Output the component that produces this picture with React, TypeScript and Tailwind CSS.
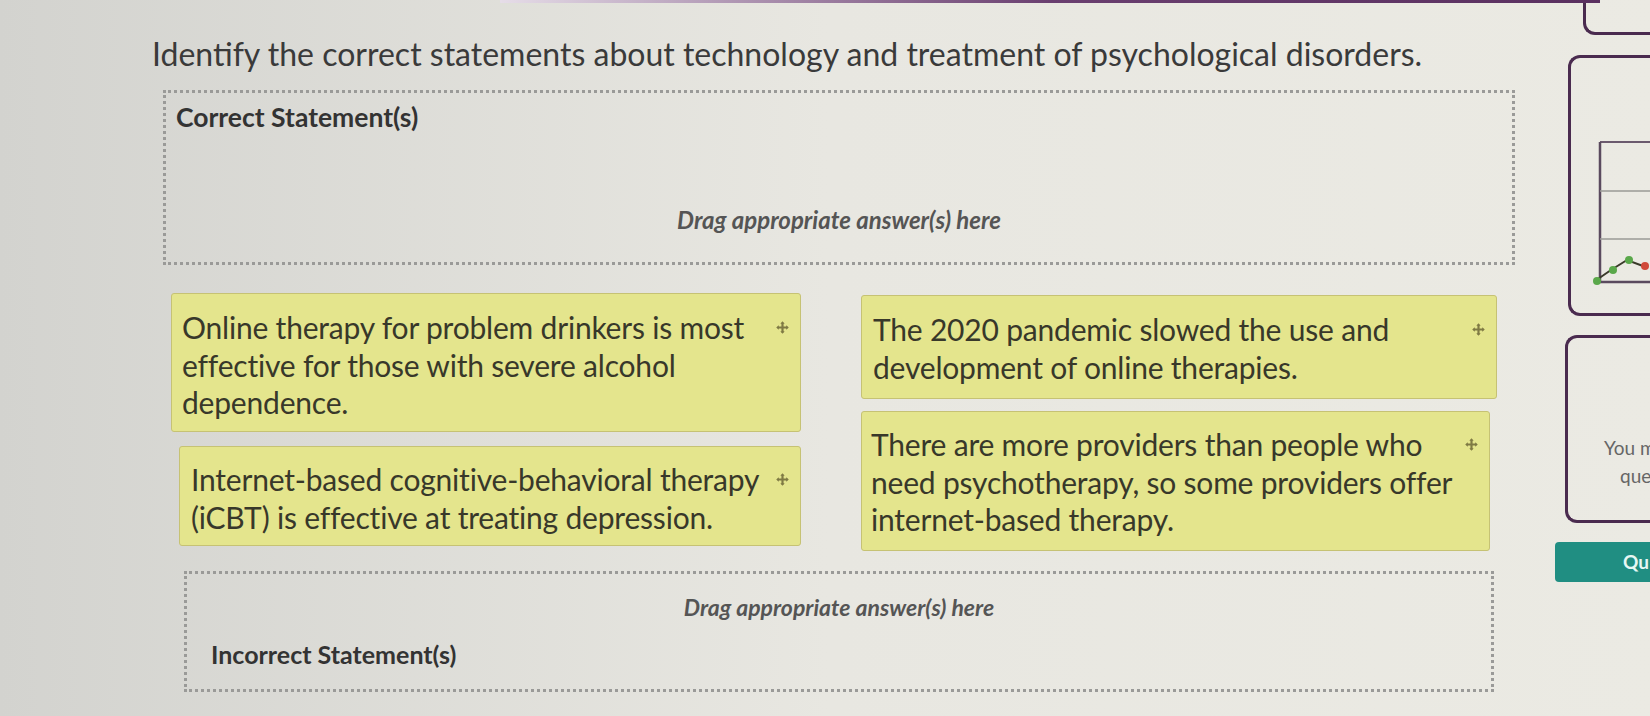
import React from "react";

const Plus = () => (
  <svg width="13" height="13" viewBox="0 0 12 12" className="shrink-0">
    <path d="M6 1.5v9M1.5 6h9" stroke="#7f7a44" strokeWidth="2" />
    <path d="M6 0.2L4 2.6h4zM6 11.8L4 9.4h4zM0.2 6L2.6 4v4zM11.8 6L9.4 4v4z" fill="#7f7a44" />
  </svg>
);

const Card = ({ lines, cls }: { lines: string[]; cls: string }) => (
  <div className={`flex justify-between rounded-[3px] border border-[#c6c274] bg-[#e4e58d] ${cls}`}>
    <div className="text-[30px] leading-[37.5px] tracking-[-0.2px] text-[#38382a]">
      {lines.map((l, i) => (
        <div key={i} className="whitespace-nowrap">{l}</div>
      ))}
    </div>
    <div className="pt-[12px] pr-[11px]">
      <Plus />
    </div>
  </div>
);

export default function App() {
  return (
    <div
      className="relative flex h-[716px] w-[1650px] overflow-hidden bg-gradient-to-r from-[#d3d3cf] via-[#e8e7e1] to-[#ebeae3] text-[#444]"
      style={{ fontFamily: "Lato, 'Open Sans', sans-serif" }}
    >
      {/* top purple line */}
      <div className="absolute left-[500px] top-0 h-[3px] w-[1100px] bg-gradient-to-r from-[#e6dde8] via-[#6a3f70] to-[#5a3060]" />

      {/* main column */}
      <div className="flex w-[1540px] shrink-0 flex-col pl-[152px] pt-[30px]">
        <h1 className="whitespace-nowrap text-[32px] leading-[48px] text-[#3a3a3a]">
          Identify the correct statements about technology and treatment of psychological disorders.
        </h1>

        {/* correct box */}
        <div className="ml-[11px] mt-[12px] flex h-[175px] w-[1352px] flex-col border-[3px] border-dotted border-[#9a9a98] px-[10px] pt-[8px]">
          <div className="text-[26.5px] font-bold leading-[32px] text-[#333]">Correct Statement(s)</div>
          <div className="mt-[72px] text-center text-[24px] font-bold italic leading-[30px] text-[#555]">
            Drag appropriate answer(s) here
          </div>
        </div>

        {/* cards */}
        <div className="mt-[28px] flex gap-[60px] pl-[19px]">
          <div className="flex w-[630px] flex-col gap-[14px]">
            <Card
              cls="h-[139px] pl-[10px] pt-[15px]"
              lines={["Online therapy for problem drinkers is most", "effective for those with severe alcohol", "dependence."]}
            />
            <Card
              cls="ml-[8px] h-[100px] pl-[11px] pt-[14px]"
              lines={["Internet-based cognitive-behavioral therapy", "(iCBT) is effective at treating depression."]}
            />
          </div>
          <div className="flex w-[636px] flex-col gap-[12px]">
            <Card
              cls="mt-[2px] h-[104px] pl-[11px] pt-[15px]"
              lines={["The 2020 pandemic slowed the use and", "development of online therapies."]}
            />
            <Card
              cls="h-[140px] pl-[9px] pt-[14px] mr-[7px]"
              lines={["There are more providers than people who", "need psychotherapy, so some providers offer", "internet-based therapy."]}
            />
          </div>
        </div>

        {/* incorrect box */}
        <div className="ml-[32px] mt-[20px] flex h-[121px] w-[1310px] flex-col border-[3px] border-dotted border-[#9a9a98] px-[24px] pt-[18px]">
          <div className="text-center text-[23px] font-bold italic leading-[30px] text-[#555]">
            Drag appropriate answer(s) here
          </div>
          <div className="mt-[17px] text-[25px] font-bold leading-[30px] text-[#333]">Incorrect Statement(s)</div>
        </div>
      </div>

      {/* sidebar */}
      <div className="flex min-w-0 flex-1 flex-col">
        <div className="ml-[43px] h-[35px] rounded-bl-[12px] border-b-[3px] border-l-[3px] border-[#4a2b4f]" />
        <div className="ml-[28px] mt-[20px] flex h-[261px] flex-col rounded-l-[12px] border-y-[3px] border-l-[3px] border-[#4a2b4f] pl-[26px] pt-[84px]">
          <svg width="90" height="145" viewBox="0 0 90 145" className="overflow-visible">
            <path d="M3 0H90" stroke="#6b5a6e" strokeWidth="2" />
            <path d="M3 0V140H90" stroke="#5a4a5e" strokeWidth="2.5" fill="none" />
            <path d="M3 49H90M3 97H90" stroke="#9a9a96" strokeWidth="1.5" />
            <path d="M-2 139L14 128L30 118L46 124" stroke="#3a3a2a" strokeWidth="2" fill="none" />
            <circle cx="0" cy="139" r="4" fill="#5aa84a" />
            <circle cx="16" cy="128" r="4" fill="#5aa84a" />
            <circle cx="32" cy="118" r="4" fill="#5aa84a" />
            <circle cx="48" cy="124" r="4" fill="#d04a3a" />
          </svg>
        </div>
        <div className="ml-[25px] mt-[19px] flex h-[188px] flex-col rounded-l-[12px] border-y-[3px] border-l-[3px] border-[#4a2b4f] pl-[36px] pt-[96px] text-[19px] leading-[28px] text-[#666]">
          <div className="whitespace-nowrap">You m</div>
          <div className="whitespace-nowrap pl-[16px]">que</div>
        </div>
        <div className="ml-[15px] mt-[19px] flex h-[40px] items-center rounded-l-[4px] bg-[#208e82] pl-[68px] text-[19px] font-bold text-[#e6f7f4]">
          Qu
        </div>
      </div>
    </div>
  );
}
